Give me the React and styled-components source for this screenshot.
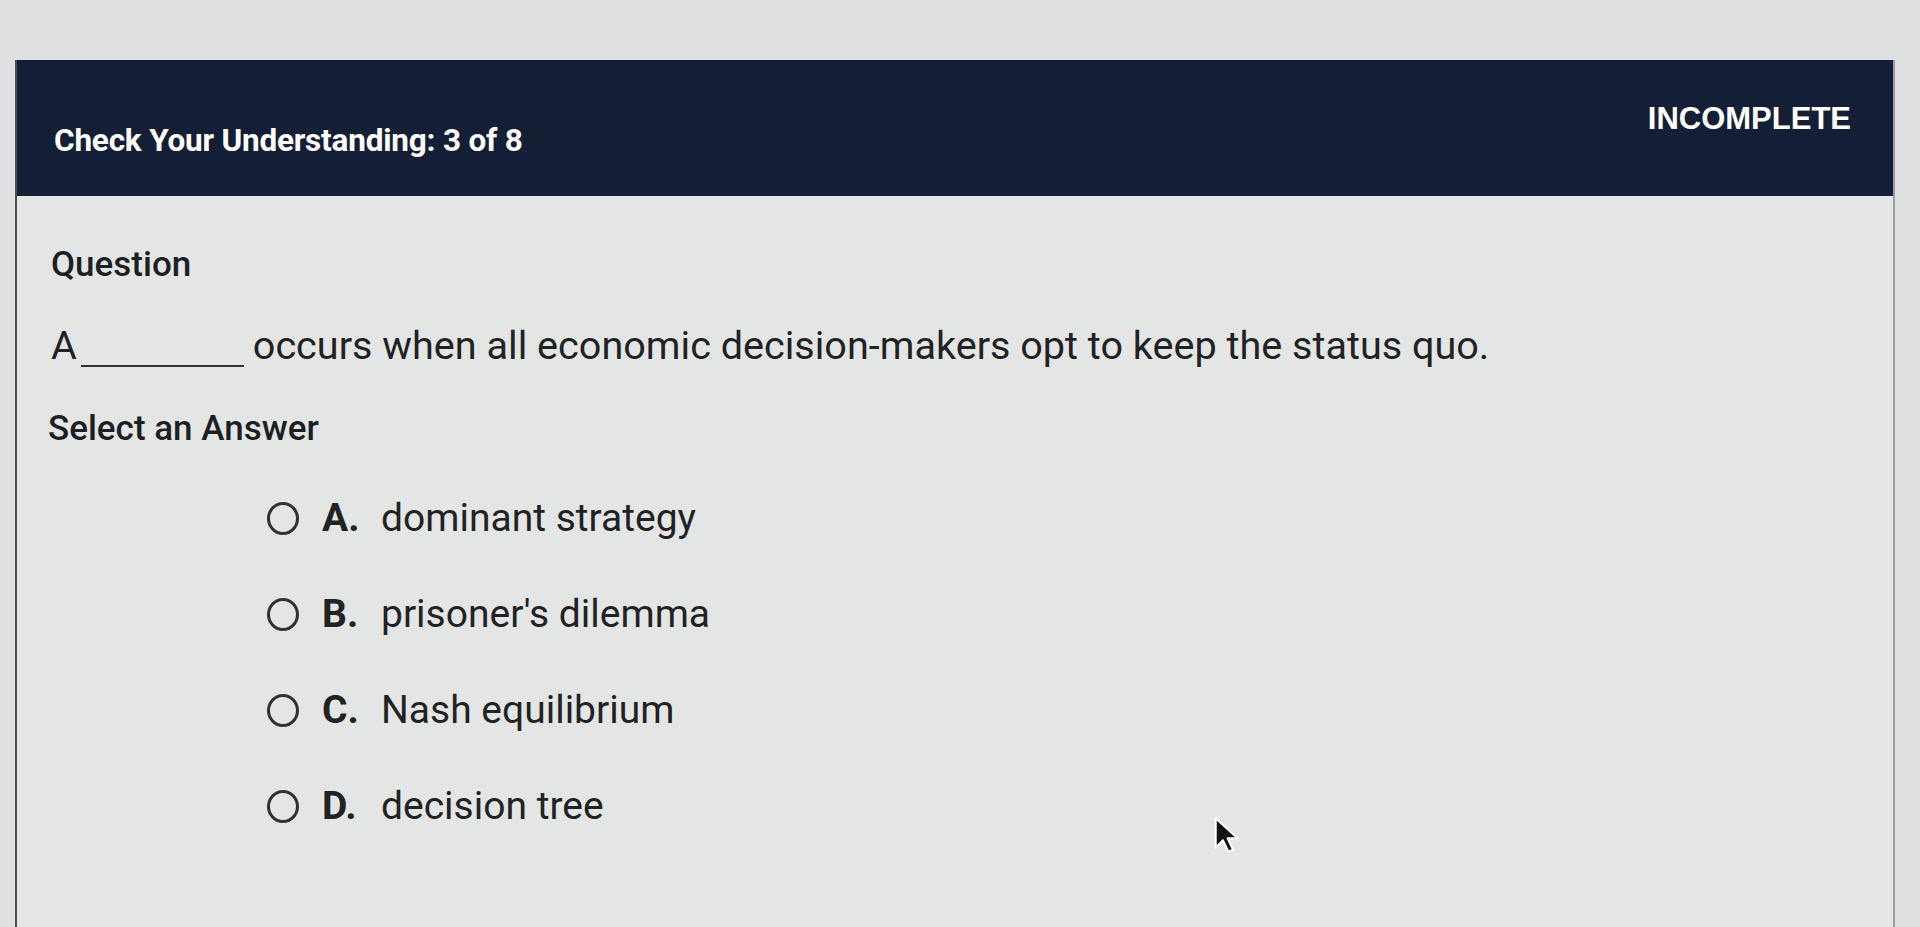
import styled, { createGlobalStyle } from "styled-components";

const GlobalStyle = createGlobalStyle`
  html, body {
    margin: 0;
    padding: 0;
    background: #dfe0e2;
    font-family: Roboto, "Liberation Sans", sans-serif;
    color: #222;
  }
`;

const Page = styled.div`
  width: 1920px;
  height: 927px;
  padding-top: 60px;
  box-sizing: border-box;
  overflow: hidden;
  position: relative;
`;

const Panel = styled.section`
  margin-left: 15px;
  width: 1880px;
  height: 867px;
  display: flex;
  flex-direction: column;
  background: #e4e6e6;
  border-left: 2px solid #4a4d52;
  border-right: 2px solid #9a9da2;
  box-sizing: border-box;
`;

const Header = styled.header`
  height: 136px;
  flex: none;
  display: flex;
  align-items: center;
  justify-content: space-between;
  padding: 0 42px 0 37px;
  background: #141e34;
  color: #fff;
`;

const Title = styled.h1`
  margin: 24px 0 0;
  font-family: Roboto, sans-serif;
  font-weight: 700;
  font-size: 31.5px;
  letter-spacing: -0.2px;
`;

const Status = styled.span`
  font-family: "Liberation Sans", Arial, sans-serif;
  font-weight: 700;
  font-size: 31px;
  margin-top: -18px;
`;

const Body = styled.div`
  display: flex;
  flex-direction: column;
  padding: 46px 34px 0 34px;
`;

const Heading = styled.h2`
  margin: 0;
  font-family: Roboto, sans-serif;
  font-weight: 500;
  font-size: 35px;
  line-height: 46px;
  color: #1d1f22;
`;

const Prompt = styled.p`
  margin: 34px 0 0;
  font-family: Roboto, sans-serif;
  font-weight: 400;
  font-size: 39.6px;
  line-height: 48px;
  color: #222;
  display: flex;
  align-items: baseline;
  white-space: nowrap;
`;

const Blank = styled.span`
  display: inline-block;
  width: 163px;
  margin: 0 9px 0 4px;
  border-bottom: 2px solid #333;
  transform: translateY(8px);
`;

const SelectLabel = styled(Heading)`
  margin-top: 36px;
  margin-left: -3px;
`;

const Options = styled.div`
  display: flex;
  flex-direction: column;
  gap: 48px;
  margin: 42px 0 0 216px;
`;

const Option = styled.label`
  display: flex;
  align-items: center;
  font-family: Roboto, sans-serif;
  font-size: 39px;
  line-height: 48px;
  color: #222;
  cursor: pointer;
`;

const Radio = styled.span`
  width: 32px;
  height: 33px;
  border: 3.5px solid #303236;
  border-radius: 50%;
  box-sizing: border-box;
  flex: none;
  margin-right: 23px;
`;

const Letter = styled.b`
  font-weight: 700;
  width: 59px;
  flex: none;
`;

const Cursor = styled.svg`
  position: absolute;
  left: 1213px;
  top: 815px;
`;

const options = [
  ["A.", "dominant strategy"],
  ["B.", "prisoner's dilemma"],
  ["C.", "Nash equilibrium"],
  ["D.", "decision tree"],
];

export default function App() {
  return (
    <Page>
      <GlobalStyle />
      <Panel>
        <Header>
          <Title>Check Your Understanding: 3 of 8</Title>
          <Status>INCOMPLETE</Status>
        </Header>
        <Body>
          <Heading>Question</Heading>
          <Prompt>
            A<Blank />
            occurs when all economic decision-makers opt to keep the status quo.
          </Prompt>
          <SelectLabel>Select an Answer</SelectLabel>
          <Options>
            {options.map(([l, t]) => (
              <Option key={l}>
                <Radio />
                <Letter>{l}</Letter>
                {t}
              </Option>
            ))}
          </Options>
        </Body>
      </Panel>
      <Cursor width="32" height="44" viewBox="0 0 24 32">
        <path
          d="M2 2 L2 24 L7.5 18.5 L11.5 27 L15 25.5 L11 17 L18.5 17 Z"
          fill="#111"
          stroke="#fff"
          strokeWidth="1.6"
          strokeLinejoin="round"
        />
      </Cursor>
    </Page>
  );
}
